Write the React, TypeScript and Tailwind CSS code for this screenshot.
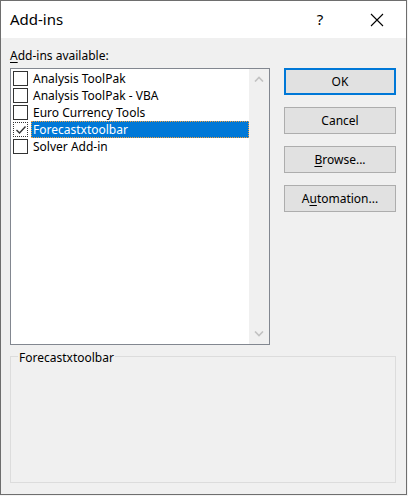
import React from "react";

const items = [
  { label: "Analysis ToolPak", checked: false },
  { label: "Analysis ToolPak - VBA", checked: false },
  { label: "Euro Currency Tools", checked: false },
  { label: "Forecastxtoolbar", checked: true, selected: true },
  { label: "Solver Add-in", checked: false },
];

function Btn({ children, primary }: { children: React.ReactNode; primary?: boolean }) {
  return (
    <div
      className={
        "h-[27px] w-[112px] flex items-center justify-center bg-[#e1e1e1] text-[12px] text-black " +
        (primary ? "border-2 border-[#0078d7]" : "border border-[#adadad]")
      }
    >
      {children}
    </div>
  );
}

export default function App() {
  return (
    <div
      className="w-[408px] h-[496px] bg-[#f3f3f3] relative overflow-hidden"
      style={{ fontFamily: '"Noto Sans", "Open Sans", sans-serif' }}
    >
      <div className="w-[407px] h-[495px] border border-[#6e6e6e] bg-[#f0f0f0] flex flex-col">
        {/* title bar */}
        <div className="h-[37px] bg-white flex items-center shrink-0">
          <div className="pl-[9px] text-[15px] text-black flex-1 leading-none">Add-ins</div>
          <div className="w-[20px] text-[15px] text-black leading-none mr-[40px] text-center">?</div>
          <svg width="14" height="14" viewBox="0 0 14 14" className="mr-[22px]">
            <path d="M1 1 L13 13 M13 1 L1 13" stroke="#000" strokeWidth="1.1" />
          </svg>
        </div>
        <div className="flex flex-col px-[9px] pt-[10px]">
          <div className="text-[12px] text-black leading-[16px] h-[20px]">
            <span className="underline underline-offset-2">A</span>dd-ins available:
          </div>
          <div className="flex">
            {/* listbox */}
            <div className="w-[260px] h-[277px] border border-[#828790] bg-white flex">
              <div className="flex-1 flex flex-col pt-[1px] pl-[2px]">
                {items.map((it) => (
                  <div key={it.label} className="h-[17px] flex items-center">
                    <div
                      className={
                        "w-[15px] h-[15px] bg-white flex items-center justify-center " +
                        (it.selected ? "border border-dotted border-[#333]" : "border border-[#333]")
                      }
                    >
                      {it.checked && (
                        <svg width="12" height="12" viewBox="0 0 12 12">
                          <path d="M1.5 6 L4.5 9 L10.5 2.5" fill="none" stroke="#333" strokeWidth="1.4" />
                        </svg>
                      )}
                    </div>
                    <div
                      className={
                        "ml-[3px] h-[17px] flex items-center text-[12px] pl-[2px] " +
                        (it.selected
                          ? "bg-[#0078d7] text-white flex-1 outline outline-1 outline-dotted outline-[#f0a040] -outline-offset-1"
                          : "text-black")
                      }
                    >
                      {it.label}
                    </div>
                  </div>
                ))}
              </div>
              <div className="w-[20px] bg-[#f0f0f0] flex flex-col justify-between items-center py-[7px]">
                <svg width="10" height="6" viewBox="0 0 10 6">
                  <path d="M1 5.5 L5 1.5 L9 5.5" fill="none" stroke="#c2c2c2" strokeWidth="1.6" />
                </svg>
                <svg width="10" height="6" viewBox="0 0 10 6">
                  <path d="M1 0.5 L5 4.5 L9 0.5" fill="none" stroke="#c2c2c2" strokeWidth="1.6" />
                </svg>
              </div>
            </div>
            {/* buttons */}
            <div className="ml-[14px] flex flex-col gap-[12px]">
              <Btn primary>OK</Btn>
              <Btn>Cancel</Btn>
              <Btn>
                <span className="underline underline-offset-2">B</span>rowse...
              </Btn>
              <Btn>
                A<span className="underline underline-offset-2">u</span>tomation...
              </Btn>
            </div>
          </div>
          {/* group box */}
          <div className="relative mt-[11px] w-[386px] h-[127px] border border-[#dcdcdc]">
            <div className="absolute left-[7px] -top-[7px] bg-[#f0f0f0] pl-[1px] pr-[1px] text-[12px] leading-[16px] text-black">
              Forecastxtoolbar
            </div>
          </div>
        </div>
      </div>
    </div>
  );
}
